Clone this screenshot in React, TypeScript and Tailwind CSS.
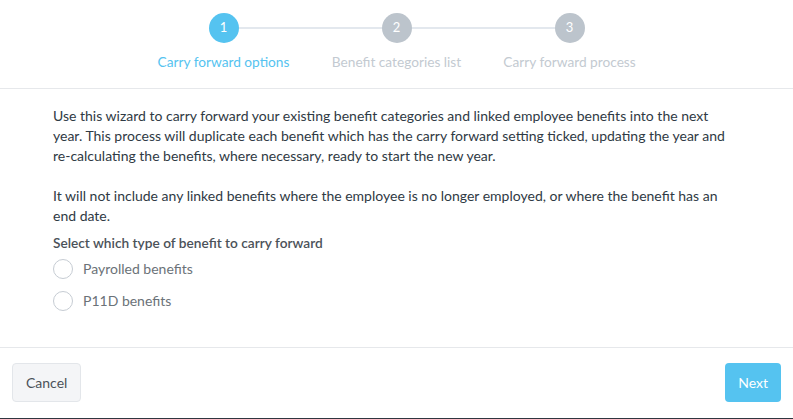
const steps = [
  { n: 1, label: "Carry forward options", active: true },
  { n: 2, label: "Benefit categories list", active: false },
  { n: 3, label: "Carry forward process", active: false },
];

const options = ["Payrolled benefits", "P11D benefits"];

export default function App() {
  return (
    <div
      className="flex h-[419px] w-[793px] flex-col bg-white text-[#2f3a44]"
      style={{ fontFamily: "Lato, 'Open Sans', sans-serif" }}
    >
      <div className="h-[89px] border-b border-[#e6e8eb]">
        <div className="relative mx-auto grid w-[519px] grid-cols-3 pt-[13px]">
          <div className="absolute left-[86px] right-[86px] top-[27px] h-[2px] bg-[#e3e8ee]" />
          {steps.map((s) => (
            <div key={s.n} className="relative flex flex-col items-center">
              <div
                className={
                  s.active
                    ? "flex h-[30px] w-[30px] items-center justify-center rounded-full bg-[#55c3f0] text-[13px] text-white"
                    : "flex h-[30px] w-[30px] items-center justify-center rounded-full bg-[#bcc4cc] text-[13px] text-white"
                }
              >
                {s.n}
              </div>
              <div
                className={
                  s.active
                    ? "mt-[10px] text-[13.7px] leading-[18px] text-[#55c3f0]"
                    : "mt-[10px] text-[13.7px] leading-[18px] text-[#c3cad1]"
                }
              >
                {s.label}
              </div>
            </div>
          ))}
        </div>
      </div>

      <div className="flex-1 px-[53px] pt-[17px] text-[14px] leading-[20px]">
        <p>
          Use this wizard to carry forward your existing benefit categories and linked employee benefits into the next
          year. This process will duplicate each benefit which has the carry forward setting ticked, updating the year and
          re-calculating the benefits, where necessary, ready to start the new year.
        </p>
        <p className="mt-[20px]">
          It will not include any linked benefits where the employee is no longer employed, or where the benefit has an
          end date.
        </p>
        <div className="mt-[7px] text-[13.7px] font-semibold text-[#4b5259]">
          Select which type of benefit to carry forward
        </div>
        {options.map((o) => (
          <label key={o} className="flex h-8 items-center gap-[10px]">
            <span className="h-[20px] w-[20px] rounded-full border border-[#c6ccd3] bg-white" />
            <span className="text-[14px] text-[#6b7278]">{o}</span>
          </label>
        ))}
      </div>

      <div className="flex items-center justify-between border-t border-[#e6e8eb] px-[12px] pb-[16px] pt-[15px]">
        <button className="h-[39px] rounded-[4px] border border-[#e3e6ea] bg-[#f4f5f7] px-[13px] text-[14px] text-[#4b5259]">
          Cancel
        </button>
        <button className="h-[39px] rounded-[4px] bg-[#55c3f0] px-[13px] text-[14px] text-white">Next</button>
      </div>
      <div className="h-px bg-[#2f3640]" />
    </div>
  );
}
